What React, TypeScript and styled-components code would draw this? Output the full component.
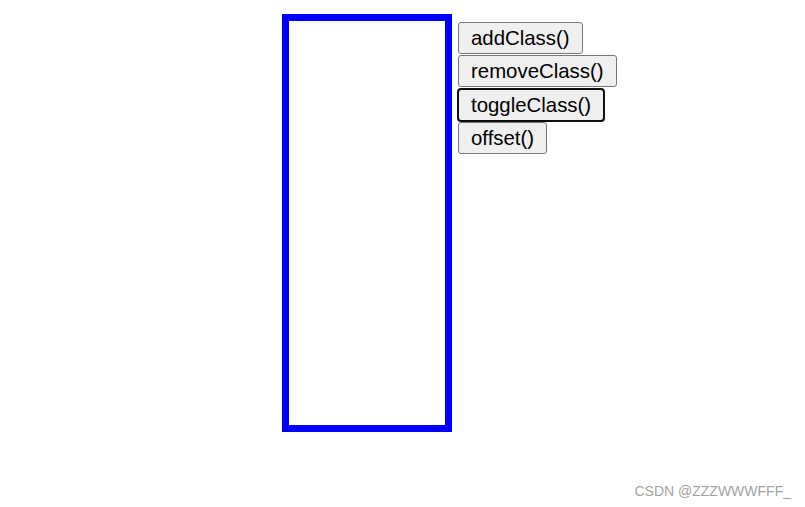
import styled, { createGlobalStyle } from 'styled-components';

const GlobalStyle = createGlobalStyle`
    html, body {
        margin: 0;
        padding: 0;
        background: #ffffff;
    }
    body {
        width: 805px;
        height: 507px;
        overflow: hidden;
        position: relative;
        font-family: 'Liberation Sans', Arial, sans-serif;
    }
`;

const Page = styled.div`
    display: flex;
    align-items: flex-start;
    padding: 14px 0 0 282px;
`;

const BlueBox = styled.div`
    width: 156px;
    height: 404px;
    border: 7px solid #0000ff;
`;

const ButtonColumn = styled.div`
    display: flex;
    flex-direction: column;
    align-items: flex-start;
    gap: 1.3px;
    margin: 8px 0 0 6px;
`;

const ActionButton = styled.button<{ $focused?: boolean }>`
    box-sizing: border-box;
    height: 32px;
    padding: 0 12px;
    font-family: 'Liberation Sans', Arial, sans-serif;
    font-size: 20.4px;
    line-height: 30px;
    color: #000000;
    background: #efefef;
    border: 1px solid #767676;
    border-radius: 3px;
    outline: ${({ $focused }) => ($focused ? '2px solid #101010' : 'none')};
    outline-offset: -1px;
    cursor: pointer;
`;

const Watermark = styled.div`
    position: absolute;
    right: 14px;
    bottom: 8px;
    font-family: 'Liberation Sans', Arial, sans-serif;
    font-size: 14px;
    line-height: 16px;
    color: #a3a3a3;
`;

const buttons = ['addClass()', 'removeClass()', 'toggleClass()', 'offset()'];

const App = () => {
    return (
        <>
            <GlobalStyle />
            <Page>
                <BlueBox />
                <ButtonColumn>
                    {buttons.map((label) => (
                        <ActionButton key={label} $focused={label === 'toggleClass()'}>
                            {label}
                        </ActionButton>
                    ))}
                </ButtonColumn>
            </Page>
            <Watermark>CSDN @ZZZWWWFFF_</Watermark>
        </>
    );
};

export default App;
